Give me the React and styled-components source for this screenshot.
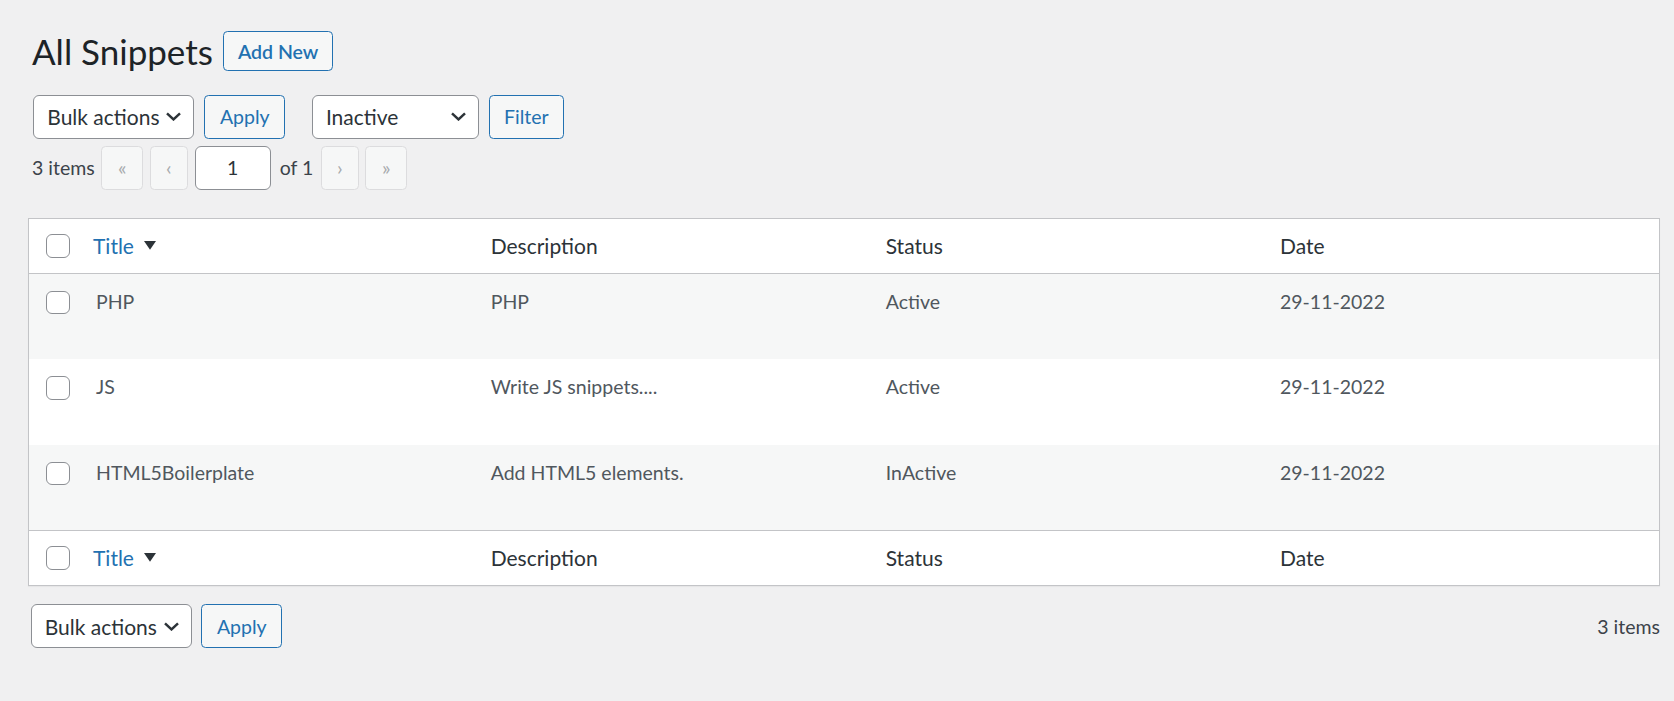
import React from "react";
import styled, { createGlobalStyle } from "styled-components";

const GlobalStyle = createGlobalStyle`
  html, body {
    margin: 0;
    padding: 0;
    background: #f0f0f1;
  }
  body {
    font-family: Lato, "Liberation Sans", sans-serif;
    color: #3c434a;
    min-height: 100vh;
  }
  * { box-sizing: border-box; }
`;

const Page = styled.div`
  padding: 31px 14px 40px 28px;
`;

const HeadingRow = styled.div`
  display: flex;
  align-items: center;
  gap: 10px;
  height: 40px;
  padding-left: 4px;
`;

const Title = styled.h1`
  margin: 0;
  font-size: 35px;
  font-weight: 400;
  line-height: 1.2;
  color: #1d2327;
`;

const AddNew = styled.a`
  display: inline-flex;
  align-items: center;
  height: 40px;
  padding: 0 14px;
  border: 1px solid #2271b1;
  border-radius: 4.5px;
  background: #f6f7f7;
  color: #2271b1;
  font-size: 19.5px;
  font-weight: 600;
  text-decoration: none;
`;

const Toolbar = styled.div`
  display: flex;
  align-items: center;
  height: 44.4px;
  margin-top: ${(p) => p.$mt}px;
  padding-left: ${(p) => p.$pl}px;
`;

const ActionGroup = styled.div`
  display: flex;
  align-items: center;
  gap: ${(p) => p.$gap || 10}px;
  margin-right: ${(p) => p.$mr || 0}px;
`;

const SelectBox = styled.div`
  width: ${(p) => p.$w}px;
  height: 44.4px;
  border: 1px solid #8c8f94;
  border-radius: 6px;
  background: #fff;
  display: flex;
  align-items: center;
  justify-content: space-between;
  padding: 0 12px 0 13px;
  font-size: 21px;
  color: #2c3338;
`;

const Button = styled.button`
  width: ${(p) => p.$w}px;
  height: 44.4px;
  padding: 0;
  border: 1px solid #2271b1;
  border-radius: 4.5px;
  background: #f6f7f7;
  color: #2271b1;
  font-family: inherit;
  font-size: 19.5px;
  cursor: pointer;
`;

const Count = styled.span`
  font-size: 19.5px;
  color: #3c434a;
  margin-left: ${(p) => (p.$right ? "auto" : "0")};
`;

const Pager = styled.div`
  display: flex;
  align-items: center;
  gap: 6.5px;
`;

const NavButton = styled.span`
  display: inline-flex;
  align-items: center;
  justify-content: center;
  width: ${(p) => p.$w}px;
  height: 44px;
  border: 1px solid #dcdcde;
  border-radius: 4.5px;
  background: #f6f7f7;
  color: #a7aaad;
  font-size: 20px;
  padding-bottom: 2px;
`;

const PageInput = styled.input`
  width: 76px;
  height: 44px;
  margin-left: 0.5px;
  border: 1px solid #8c8f94;
  border-radius: 6px;
  background: #fff;
  text-align: center;
  font-family: inherit;
  font-size: 19.5px;
  color: #2c3338;
  padding: 0;
`;

const OfText = styled.span`
  font-size: 19.5px;
  color: #3c434a;
  margin: 0 1px 0 2.5px;
`;

const Table = styled.table`
  width: 100%;
  margin-top: 28px;
  border: 1px solid #c3c4c7;
  border-spacing: 0;
  table-layout: fixed;
  background: #fff;
  box-shadow: 0 1px 1px rgba(0, 0, 0, 0.04);
`;

const HeadCell = styled.th`
  height: ${(p) => (p.$foot ? 54.5 : 55)}px;
  padding: 0 15px;
  text-align: left;
  vertical-align: middle;
  font-size: 21px;
  font-weight: 400;
  color: #2c3338;
  border-bottom: ${(p) => (p.$foot ? "none" : "1px solid #c3c4c7")};
  border-top: ${(p) => (p.$foot ? "1px solid #c3c4c7" : "none")};
`;

const CheckHeadCell = styled(HeadCell)`
  padding: 0 0 0 17.3px;
`;

const SortLink = styled.a`
  display: inline-flex;
  align-items: center;
  gap: 10px;
  color: #2271b1;
  text-decoration: none;
`;

const Row = styled.tr`
  background: ${(p) => (p.$striped ? "#f6f7f7" : "#fff")};
`;

const Cell = styled.td`
  height: 85.4px;
  padding: 13px 15px 0 ${(p) => (p.$primary ? 18 : 15)}px;
  vertical-align: top;
  font-size: 19.5px;
  line-height: 29.25px;
  color: #50575e;
`;

const CheckCell = styled.th`
  height: 85.4px;
  padding: 17px 0 0 17.3px;
  vertical-align: top;
  text-align: left;
`;

const Checkbox = styled.span`
  display: block;
  width: 23.5px;
  height: 23.5px;
  border: 1px solid #8c8f94;
  border-radius: 6px;
  background: #fff;
`;

const Chevron = () => (
  <svg width="15" height="9" viewBox="0 0 15 9" aria-hidden="true">
    <path d="M1 1.4 L7.5 7.4 L14 1.4" fill="none" stroke="#2c3338" strokeWidth="2.5" />
  </svg>
);

const SortArrow = () => (
  <svg width="12" height="9" viewBox="0 0 12 9" aria-hidden="true">
    <path d="M0 0 L12 0 L6 8.7 Z" fill="#2c3338" />
  </svg>
);

const rows = [
  { title: "PHP", desc: "PHP", status: "Active", date: "29-11-2022" },
  { title: "JS", desc: "Write JS snippets....", status: "Active", date: "29-11-2022" },
  { title: "HTML5Boilerplate", desc: "Add HTML5 elements.", status: "InActive", date: "29-11-2022" },
];

const HeaderRow = ({ foot }) => (
  <tr>
    <CheckHeadCell $foot={foot}>
      <Checkbox />
    </CheckHeadCell>
    <HeadCell $foot={foot}>
      <SortLink href="#">
        Title <SortArrow />
      </SortLink>
    </HeadCell>
    <HeadCell $foot={foot}>Description</HeadCell>
    <HeadCell $foot={foot}>Status</HeadCell>
    <HeadCell $foot={foot}>Date</HeadCell>
  </tr>
);

export default function App() {
  return (
    <>
      <GlobalStyle />
      <Page>
        <HeadingRow>
          <Title>All Snippets</Title>
          <AddNew href="#">Add New</AddNew>
        </HeadingRow>

        <Toolbar $mt={23.6} $pl={5.3}>
          <ActionGroup $mr={26.6}>
            <SelectBox $w={161}>
              <span>Bulk actions</span>
              <Chevron />
            </SelectBox>
            <Button $w={81}>Apply</Button>
          </ActionGroup>
          <ActionGroup>
            <SelectBox $w={167}>
              <span>Inactive</span>
              <Chevron />
            </SelectBox>
            <Button $w={75}>Filter</Button>
          </ActionGroup>
        </Toolbar>

        <Toolbar $mt={6.6} $pl={4}>
          <Pager>
            <Count>3 items</Count>
            <NavButton $w={42}>«</NavButton>
            <NavButton $w={38}>‹</NavButton>
            <PageInput readOnly value="1" />
            <OfText>of 1</OfText>
            <NavButton $w={38}>›</NavButton>
            <NavButton $w={42}>»</NavButton>
          </Pager>
        </Toolbar>

        <Table>
          <colgroup>
            <col style={{ width: 49 }} />
            <col style={{ width: 397.7 }} />
            <col style={{ width: 395 }} />
            <col style={{ width: 394.3 }} />
            <col />
          </colgroup>
          <thead>
            <HeaderRow />
          </thead>
          <tbody>
            {rows.map((r, i) => (
              <Row key={r.title} $striped={i % 2 === 0}>
                <CheckCell>
                  <Checkbox />
                </CheckCell>
                <Cell $primary>{r.title}</Cell>
                <Cell>{r.desc}</Cell>
                <Cell>{r.status}</Cell>
                <Cell>{r.date}</Cell>
              </Row>
            ))}
          </tbody>
          <tfoot>
            <HeaderRow foot />
          </tfoot>
        </Table>

        <Toolbar $mt={18.3} $pl={2.7}>
          <ActionGroup $gap={9.6}>
            <SelectBox $w={161}>
              <span>Bulk actions</span>
              <Chevron />
            </SelectBox>
            <Button $w={81}>Apply</Button>
          </ActionGroup>
          <Count $right>3 items</Count>
        </Toolbar>
      </Page>
    </>
  );
}
